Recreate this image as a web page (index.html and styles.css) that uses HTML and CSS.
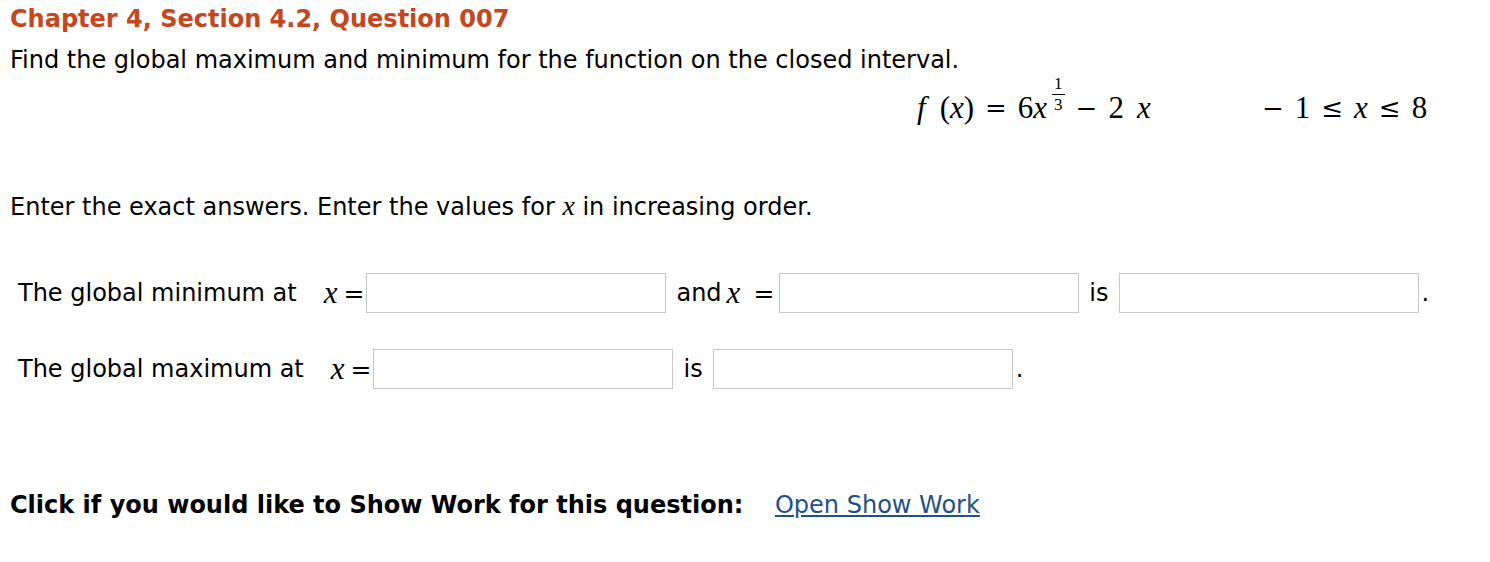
FILE: index.html
```html
<!DOCTYPE html>
<html lang="en">
<head>
    <meta charset="UTF-8">
    <title>Chapter 4, Section 4.2, Question 007</title>
    <link rel="stylesheet" href="styles.css">
</head>
<body>
    <div class="question">
        <h1 class="title">Chapter 4, Section 4.2, Question 007</h1>
        <p class="prompt">Find the global maximum and minimum for the function on the closed interval.</p>

        <!-- Function and interval -->
        <div class="formula">
            <div class="func">
                <i>f</i><span class="paren">(<i>x</i>)</span><span class="op">=</span>6<i>x</i><span class="frac"><span class="num">1</span><span class="den">3</span></span><span class="op">&minus;</span>2<i class="var">x</i>
            </div>
            <div class="interval">
                <span class="op first">&minus;</span>1<span class="op">&le;</span><i>x</i><span class="op">&le;</span>8
            </div>
        </div>

        <p class="instructions">Enter the exact answers. Enter the values for <i class="mvar">x</i> in increasing order.</p>

        <!-- Answer rows -->
        <div class="answers">
            <div class="answer-row">
                <span class="label">The global minimum at</span>
                <span class="meq"><i>x</i><span class="eq">=</span></span>
                <input type="text" class="answer">
                <span class="sep">and</span>
                <span class="meq tight"><i>x</i><span class="eq">=</span></span>
                <input type="text" class="answer">
                <span class="sep">is</span>
                <input type="text" class="answer">
                <span class="dot">.</span>
            </div>
            <div class="answer-row">
                <span class="label">The global maximum at</span>
                <span class="meq"><i>x</i><span class="eq">=</span></span>
                <input type="text" class="answer">
                <span class="sep">is</span>
                <input type="text" class="answer">
                <span class="dot">.</span>
            </div>
        </div>

        <p class="show-work">
            <b>Click if you would like to Show Work for this question:</b>
            <a href="#">Open Show Work</a>
        </p>
    </div>
</body>
</html>
```

FILE: styles.css
```css
/* Global Styles */
body {
    font-family: "DejaVu Sans", Verdana, sans-serif;
    font-size: 24px;
    color: #000;
    background-color: #fff;
    margin: 0;
    padding: 0;
}

.question {
    padding: 4px 10px;
}

.title {
    font-size: 24px;
    font-weight: bold;
    color: #c4471d;
    margin: 0 0 11px;
    line-height: 30px;
}

.prompt {
    margin: 0;
    line-height: 30px;
}

/* Formula */
.formula {
    display: flex;
    align-items: center;
    height: 66px;
    padding-left: 907px;
    font-family: "Liberation Serif", "Times New Roman", serif;
    font-size: 31px;
}

.func,
.interval {
    display: flex;
    align-items: center;
    white-space: nowrap;
}

.func {
    width: 345px;
}

.paren {
    margin-left: 14px;
}

.op {
    font-family: "DejaVu Serif", serif;
    font-size: 26px;
    margin: 0 11px;
}

.interval .op.first {
    margin-left: 0;
}

.var {
    margin-left: 13px;
}

.frac {
    display: inline-flex;
    flex-direction: column;
    align-items: center;
    font-size: 17px;
    line-height: 16px;
    margin: -28px 0 0 5px;
}

.frac .num {
    border-bottom: 1px solid #000;
    padding: 0 2px 2px;
}

.frac .den {
    padding-top: 2px;
}

.instructions {
    margin: 50px 0 0;
    line-height: 30px;
}

.mvar {
    font-family: "Liberation Serif", "Times New Roman", serif;
    font-size: 28px;
}

/* Answer rows */
.answers {
    margin-top: 51px;
    padding-left: 8px;
}

.answer-row {
    display: flex;
    align-items: center;
    height: 40px;
    margin-bottom: 36px;
}

.meq {
    display: flex;
    align-items: center;
    margin-left: 27px;
    font-family: "Liberation Serif", "Times New Roman", serif;
    font-size: 31px;
}

.meq.tight {
    margin-left: -5px;
}

.eq {
    font-family: "DejaVu Serif", serif;
    font-size: 25px;
    margin: 0 2px 0 6px;
}

.meq.tight .eq {
    margin: 0 5px 0 13px;
}

.answer {
    width: 300px;
    height: 40px;
    box-sizing: border-box;
    border: 1px solid #c8c8c8;
    margin: 0;
    padding: 4px;
    font-size: 18px;
}

.sep {
    margin: 0 10px;
}

.dot {
    margin-left: 3px;
}

.show-work {
    margin: 101px 0 0;
    line-height: 30px;
}

.show-work a {
    color: #1f5189;
    margin-left: 24px;
}
```
